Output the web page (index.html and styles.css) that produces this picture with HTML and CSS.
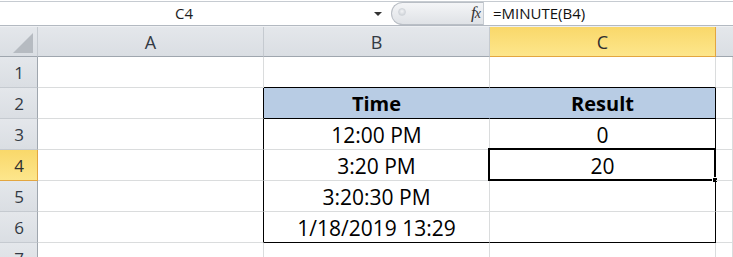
FILE: index.html
```html
<!DOCTYPE html>
<html>
<head>
<meta charset="utf-8">
<link rel="stylesheet" href="styles.css">
</head>
<body>
<div class="fbar">
  <div class="namebox">C4</div>
  <div class="dropdown"><span class="arrow"></span></div>
  <div class="pill">
    <span class="knob"></span>
    <span class="fx">f<i>x</i></span>
  </div>
  <div class="formula">=MINUTE(B4)</div>
</div>
<div class="gap"></div>
<div class="sheet">
  <div class="hdr corner"><svg width="22" height="22" viewBox="0 0 22 22"><polygon points="21,1 21,21 1,21" fill="#b6bbc1"/></svg></div>
  <div class="hdr col">A</div>
  <div class="hdr col">B</div>
  <div class="hdr col sel">C</div>
  <div class="hdr col last"></div>

  <div class="hdr row">1</div>
  <div class="cell"></div>
  <div class="cell tb"></div>
  <div class="cell tb"></div>
  <div class="cell"></div>

  <div class="hdr row">2</div>
  <div class="cell tl"></div>
  <div class="cell th">Time</div>
  <div class="cell th tr">Result</div>
  <div class="cell"></div>

  <div class="hdr row">3</div>
  <div class="cell tl"></div>
  <div class="cell">12:00 PM</div>
  <div class="cell tr">0</div>
  <div class="cell"></div>

  <div class="hdr row sel">4</div>
  <div class="cell tl"></div>
  <div class="cell">3:20 PM</div>
  <div class="cell tr active">20<span class="selbox"><span class="handle"></span></span></div>
  <div class="cell"></div>

  <div class="hdr row">5</div>
  <div class="cell tl"></div>
  <div class="cell">3:20:30 PM</div>
  <div class="cell tr"></div>
  <div class="cell"></div>

  <div class="hdr row">6</div>
  <div class="cell tl"></div>
  <div class="cell tb">1/18/2019 13:29</div>
  <div class="cell tb tr"></div>
  <div class="cell"></div>

  <div class="hdr row">7</div>
  <div class="cell"></div>
  <div class="cell"></div>
  <div class="cell"></div>
  <div class="cell"></div>
</div>
</body>
</html>
```
FILE: styles.css
```css
* { box-sizing: border-box; }
html, body { margin: 0; padding: 0; background: #fff; }
body { width: 733px; height: 257px; overflow: hidden; font-family: "Open Sans", "Liberation Sans", sans-serif; }

.fbar {
  display: flex;
  height: 25px;
  margin-top: 1px;
  border-top: 1px solid #c6cbd1;
  border-bottom: 1px solid #b3b9c1;
  background: #fff;
}
.namebox {
  width: 368px;
  text-align: center;
  font-size: 15px;
  line-height: 22px;
  color: #1e1e1e;
}
.dropdown {
  width: 23px;
  display: flex;
  align-items: center;
  justify-content: center;
}
.arrow {
  width: 0; height: 0;
  border-left: 4px solid transparent;
  border-right: 4px solid transparent;
  border-top: 4px solid #333;
  margin-left: -3px;
}
.pill {
  position: relative;
  width: 92px;
  height: 23px;
  border: 1px solid #b9bec5;
  border-right: none;
  border-radius: 12px 0 0 12px;
  background: linear-gradient(#f4f5f7, #dfe2e6);
  display: flex;
  align-items: center;
  justify-content: flex-end;
  padding-right: 3px;
}
.knob {
  position: absolute;
  left: 6px; top: 5px;
  width: 8px; height: 8px;
  border-radius: 50%;
  background: radial-gradient(circle at 50% 40%, #f3f4f6, #c7ccd2);
  border: 1px solid #d2d6db;
}
.fx {
  font-family: "Liberation Serif", "DejaVu Serif", serif;
  font-style: italic;
  font-size: 17px;
  color: #333;
  letter-spacing: -1px;
  line-height: 20px;
}
.fx i { font-size: 14px; }
.formula {
  flex: 1;
  border-left: 1px solid #c6cbd1;
  font-size: 15px;
  line-height: 22px;
  padding-left: 9px;
  color: #111;
}
.gap { height: 1px; background: #eef0f3; }

.sheet {
  display: grid;
  grid-template-columns: 38px 226px 226px 226px 17px;
  grid-template-rows: 30px repeat(7, 31px);
}
.hdr {
  background: linear-gradient(#e4e7eb, #dadee3);
  color: #333a44;
  font-size: 18px;
  display: flex;
  align-items: center;
  justify-content: center;
}
.hdr.col {
  border-right: 1px solid #c5cad0;
  border-bottom: 1px solid #9fa6ae;
  padding-top: 1px;
}
.hdr.col.last { border-right: none; }
.hdr.corner {
  border-right: 1px solid #c5cad0;
  border-bottom: 1px solid #9fa6ae;
  align-items: flex-end;
  justify-content: flex-end;
  padding: 0 3px 2px 0;
}
.hdr.row {
  border-right: 1px solid #9fa6ae;
  border-bottom: 1px solid #c5cad0;
  font-size: 17px;
  padding-left: 1px;
}
.hdr.sel {
  background: linear-gradient(#f9d86a, #fde68c);
  border-right-color: #e3a640;
  border-bottom-color: #e3a640;
  color: #2f2f2f;
}
.hdr.row.sel { border-right-color: #e3a640; }

.cell {
  position: relative;
  border-right: 1px solid #dadcdd;
  border-bottom: 1px solid #dadcdd;
  font-size: 21px;
  color: #000;
  display: flex;
  align-items: center;
  justify-content: center;
  padding-top: 1px;
}
.cell.tb { border-bottom-color: #000; }
.cell.tl { border-right-color: #000; }
.cell.tr { border-right-color: #000; }
.cell.th {
  background: #b8cce4;
  font-weight: bold;
  font-size: 20px;
  border-bottom-color: #000;
  border-right-color: #b8cce4;
}
.cell.th.tr { border-right-color: #000; }

.selbox {
  position: absolute;
  top: -2px; left: -2px; right: -1px; bottom: -1px;
  border: 2px solid #000;
}
.handle {
  position: absolute;
  right: -4px; bottom: -4px;
  width: 6px; height: 6px;
  background: #000;
  border: 1px solid #fff;
}
```
